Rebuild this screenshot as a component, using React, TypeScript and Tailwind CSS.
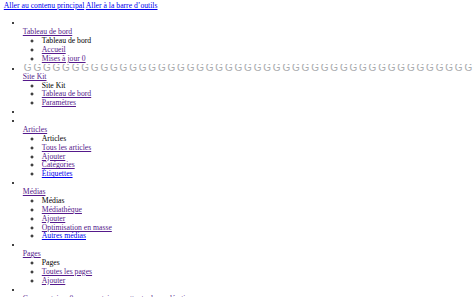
import React from "react";

const V = "text-[#551a8b] underline";
const B = "text-[#0000ee] underline";

type Sub = { label: string; link?: "v" | "b" };

function SubList({ items }: { items: Sub[] }) {
  return (
    <ul className="list-[circle] pl-[19px]">
      {items.map((it, i) => (
        <li key={i}>
          {it.link ? (
            <a href="#" className={it.link === "v" ? V : B}>
              {it.label}
            </a>
          ) : (
            it.label
          )}
        </li>
      ))}
    </ul>
  );
}

function Menu({ title, items }: { title: string; items: Sub[] }) {
  return (
    <li>
      <div>&nbsp;</div>
      <a href="#" className={V}>
        {title}
      </a>
      <SubList items={items} />
    </li>
  );
}

export default function App() {
  const gs = Array.from({ length: 60 }, () => "G").join("");
  return (
    <div
      className="h-[297px] w-[474px] overflow-hidden bg-white text-black text-[7.7px] leading-[8.88px]"
      style={{ fontFamily: '"Liberation Serif", "Times New Roman", serif' }}
    >
      <div className="pl-[3.8px] pt-[1.5px] whitespace-nowrap">
        <a href="#" className={B}>
          Aller au contenu principal
        </a>{" "}
        <a href="#" className={B}>
          Aller à la barre d’outils
        </a>
      </div>
      <ul className="list-disc pl-[22.8px] mt-[9px]">
        <li>
          <div>&nbsp;</div>
          <a href="#" className={V}>
            Tableau de bord
          </a>
          <SubList
            items={[
              { label: "Tableau de bord" },
              { label: "Accueil", link: "v" },
              { label: "Mises à jour 0", link: "v" },
            ]}
          />
        </li>
        <li>
          <div className="h-[8.88px] w-[470px] overflow-hidden whitespace-nowrap pl-[1px]">
            <span
              className="text-[10px] leading-[8.88px] tracking-[1.8px] text-[#a9abae] relative top-[0.5px]"
              style={{ fontFamily: '"Liberation Sans", Arial, sans-serif' }}
            >
              {gs}
            </span>
          </div>
          <a href="#" className={V}>
            Site Kit
          </a>
          <SubList
            items={[
              { label: "Site Kit" },
              { label: "Tableau de bord", link: "v" },
              { label: "Paramètres", link: "v" },
            ]}
          />
        </li>
        <li>
          <div>&nbsp;</div>
        </li>
        <Menu
          title="Articles"
          items={[
            { label: "Articles" },
            { label: "Tous les articles", link: "v" },
            { label: "Ajouter", link: "v" },
            { label: "Catégories", link: "v" },
            { label: "Étiquettes", link: "b" },
          ]}
        />
        <Menu
          title="Médias"
          items={[
            { label: "Médias" },
            { label: "Médiathèque", link: "v" },
            { label: "Ajouter", link: "v" },
            { label: "Optimisation en masse", link: "v" },
            { label: "Autres médias", link: "b" },
          ]}
        />
        <Menu
          title="Pages"
          items={[
            { label: "Pages" },
            { label: "Toutes les pages", link: "v" },
            { label: "Ajouter", link: "v" },
          ]}
        />
        <li>
          <div>&nbsp;</div>
          <a href="#" className={V}>
            Commentaires 0 commentaire en attente de modération
          </a>
        </li>
      </ul>
    </div>
  );
}
